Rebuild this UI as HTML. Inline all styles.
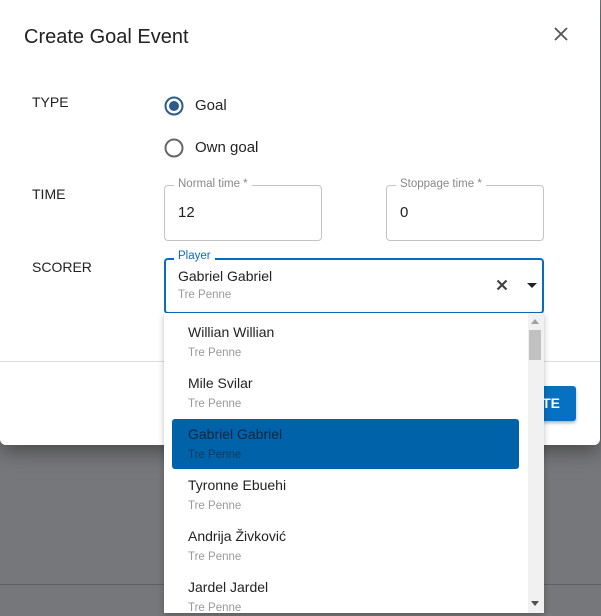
<!DOCTYPE html>
<html><head><style>
body{margin:0;width:601px;height:616px;overflow:hidden;background:#76777a;font-family:"Liberation Sans",sans-serif;position:relative}
.abs{position:absolute}
.dlg{left:0;top:0;width:600px;height:445px;background:#fff;border-radius:0 0 6px 6px;box-shadow:0 6px 20px rgba(0,0,0,.4)}
.lbl{font-size:14px;color:#222}
.fs{border:1px solid #c4c4c4;border-radius:4px}
.leg{font-size:11.5px;color:#888;background:#fff;padding:0 4px}
.item{left:0;width:347px;height:51px}
.item .n{position:absolute;left:16px;top:6px;font-size:14px;color:#222}
.item .s{position:absolute;left:16px;top:29px;font-size:11.5px;color:#999}
</style></head><body>
<div class="abs" style="left:0;top:584px;width:601px;height:1px;background:#5e5f61"></div>
<div class="abs dlg">
<div class="abs" style="left:24px;top:26px;font-size:20px;color:#222">Create Goal Event</div>
<svg class="abs" style="left:553px;top:26px" width="16" height="16"><path d="M2 2L14 14M14 2L2 14" stroke="#555" stroke-width="1.8"/></svg>
<div class="abs lbl" style="left:32px;top:94px">TYPE</div>
<div class="abs lbl" style="left:32px;top:186px">TIME</div>
<div class="abs lbl" style="left:32px;top:259px">SCORER</div>
<svg class="abs" style="left:163px;top:95px" width="22" height="22"><circle cx="11" cy="11" r="8.5" fill="none" stroke="#2c5a8c" stroke-width="2"/><circle cx="11" cy="11" r="5" fill="#2c5a8c"/></svg>
<div class="abs" style="left:195px;top:97px;font-size:15px;color:#222">Goal</div>
<svg class="abs" style="left:163px;top:137px" width="22" height="22"><circle cx="11" cy="11" r="8.5" fill="none" stroke="#666" stroke-width="2"/></svg>
<div class="abs" style="left:195px;top:139px;font-size:15px;color:#222">Own goal</div>
<div class="abs fs" style="left:164px;top:185px;width:156px;height:54px"></div>
<div class="abs leg" style="left:174px;top:178px">Normal time *</div>
<div class="abs" style="left:178px;top:204px;font-size:15px;color:#222">12</div>
<div class="abs fs" style="left:386px;top:185px;width:156px;height:54px"></div>
<div class="abs leg" style="left:396px;top:178px">Stoppage time *</div>
<div class="abs" style="left:400px;top:204px;font-size:15px;color:#222">0</div>
<div class="abs" style="left:164px;top:258px;width:376px;height:52px;border:2px solid #0a6cc0;border-radius:4px"></div>
<div class="abs leg" style="left:174px;top:250px;color:#0a6cc0">Player</div>
<div class="abs" style="left:178px;top:268px;font-size:14px;color:#222">Gabriel Gabriel</div>
<div class="abs" style="left:178px;top:289px;font-size:11.5px;color:#999">Tre Penne</div>
<svg class="abs" style="left:496px;top:279px" width="12" height="12"><path d="M1.5 1.5L10.5 10.5M10.5 1.5L1.5 10.5" stroke="#444" stroke-width="2.2"/></svg>
<svg class="abs" style="left:526px;top:282px" width="12" height="8"><path d="M1 1H11L6 6Z" fill="#222"/></svg>
<div class="abs" style="left:0;top:361px;width:600px;height:1px;background:#ddd"></div>
<div class="abs" style="left:470px;top:386px;width:106px;height:35px;background:#0670c2;border-radius:3px;box-shadow:0 2px 3px rgba(0,0,0,.3);color:#fff;font-weight:bold;font-size:14px;line-height:35px;text-align:right;padding-right:16px;box-sizing:border-box">CREATE</div>
</div>
<div class="abs" style="left:164px;top:313px;width:380px;height:300px;background:#fff;box-shadow:0 2px 6px rgba(0,0,0,.25);overflow:hidden">
<div class="abs" style="left:364px;top:0;width:16px;height:300px;background:#f1f1f1"></div>
<div class="abs" style="left:365px;top:17px;width:12px;height:30px;background:#c1c1c1"></div>
<svg class="abs" style="left:367px;top:6px" width="8" height="6"><path d="M0 5H8L4 0Z" fill="#a0a0a0"/></svg>
<svg class="abs" style="left:367px;top:288px" width="8" height="6"><path d="M0 0H8L4 5Z" fill="#505050"/></svg>
<div class="abs" style="left:8px;top:106px;width:347px;height:50px;background:#0062a8;border-radius:3px"></div>
<div class="abs item" style="left:8px;top:5px"><span class="n">Willian Willian</span><span class="s">Tre Penne</span></div>
<div class="abs item" style="left:8px;top:56px"><span class="n">Mile Svilar</span><span class="s">Tre Penne</span></div>
<div class="abs item" style="left:8px;top:107px"><span class="n" style="color:#0d2740">Gabriel Gabriel</span><span class="s" style="color:#0d3a63">Tre Penne</span></div>
<div class="abs item" style="left:8px;top:158px"><span class="n">Tyronne Ebuehi</span><span class="s">Tre Penne</span></div>
<div class="abs item" style="left:8px;top:209px"><span class="n">Andrija Živković</span><span class="s">Tre Penne</span></div>
<div class="abs item" style="left:8px;top:260px"><span class="n">Jardel Jardel</span><span class="s">Tre Penne</span></div>
</div>
</body></html>
